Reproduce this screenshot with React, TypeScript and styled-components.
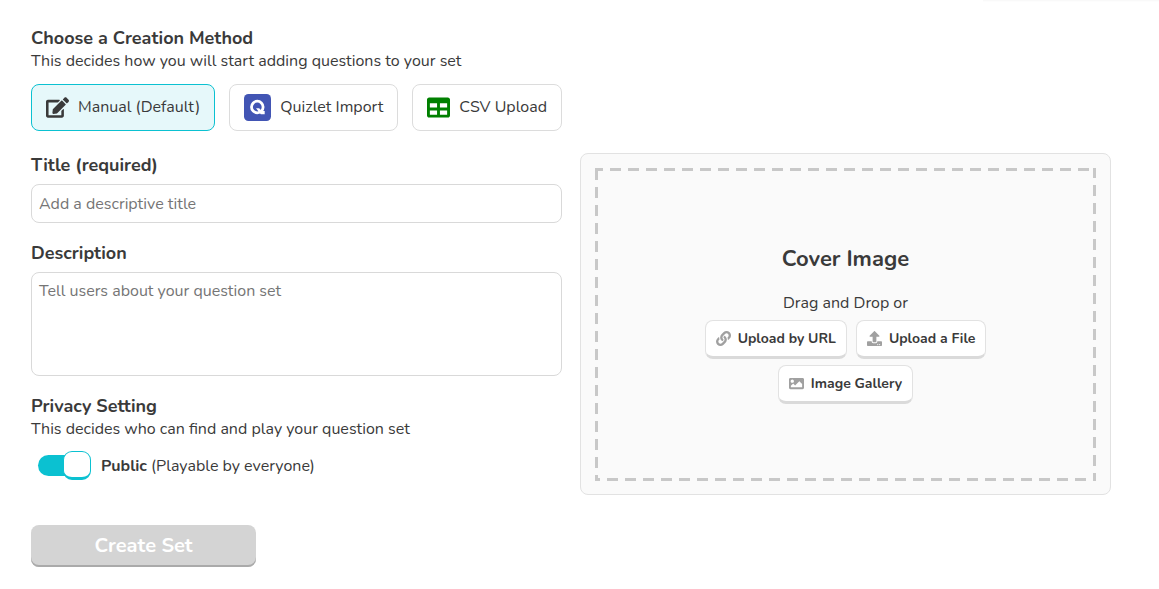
import React from "react";
import styled, { createGlobalStyle } from "styled-components";
import { FaEdit, FaTable, FaLink, FaUpload, FaImage } from "react-icons/fa";

const GlobalStyle = createGlobalStyle`
  *, *::before, *::after { box-sizing: border-box; }
  body {
    margin: 0;
    background: #fff;
    color: #3a3a3a;
    font: 400 16px/22px Nunito, "Open Sans", sans-serif;
  }
  button, input, textarea { font: inherit; color: inherit; }
`;

const HeaderShade = styled.div`
  width: 176px;
  height: 2px;
  margin-left: auto;
  background: linear-gradient(#f7f7f7, #fff);
`;

const Form = styled.form`
  padding: 24px 48px 22px 31px;
`;

const Heading = styled.h2`
  margin: 0;
  font-size: 18px;
  line-height: 24px;
  font-weight: 700;
`;

const FieldLabel = styled.label`
  display: block;
  margin-bottom: 7px;
  font-size: 18px;
  line-height: 24px;
  font-weight: 700;
`;

const Text = styled.p`
  margin: 0;
`;

const Methods = styled.div`
  display: flex;
  flex-wrap: wrap;
  gap: 14px;
  margin: 12px 0 22px;
`;

const MethodButton = styled.button<{ $active?: boolean }>`
  display: flex;
  align-items: center;
  gap: 9px;
  height: 47px;
  padding: 0 14px;
  border: 1px solid ${(p) => (p.$active ? "#0bc1d1" : "#dcdcdc")};
  border-radius: 8px;
  background: ${(p) => (p.$active ? "#e6f8fa" : "#fff")};
  cursor: pointer;
`;

const MethodName = styled.span`
  padding-bottom: 2px;
`;

const Columns = styled.div`
  display: grid;
  grid-template-columns: repeat(auto-fit, minmax(min(100%, 400px), 1fr));
  gap: 18px;
`;

const Fields = styled.div`
  display: flex;
  flex-direction: column;
  gap: 18px;
`;

const TitleInput = styled.input`
  display: block;
  width: 100%;
  height: 39px;
  padding: 0 7px;
  border: 1px solid #d9d9d9;
  border-radius: 8px;
  background: #fff;
  &::placeholder { color: #757575; }
`;

const DescriptionInput = styled.textarea`
  display: block;
  width: 100%;
  height: 104px;
  padding: 7px;
  border: 1px solid #d9d9d9;
  border-radius: 8px;
  background: #fff;
  resize: none;
  &::placeholder { color: #757575; }
`;

const ToggleRow = styled.label`
  display: flex;
  align-items: center;
  gap: 10px;
  margin-top: 11px;
  padding-left: 7px;
  cursor: pointer;
`;

const Toggle = styled.input`
  appearance: none;
  display: flex;
  align-items: center;
  width: 53px;
  height: 29px;
  margin: 0;
  cursor: pointer;
  &::before {
    content: "";
    z-index: 1;
    width: 28px;
    height: 29px;
    border: 1px solid #bbb;
    border-bottom-width: 3px;
    border-radius: 9px;
    background: #fff;
  }
  &::after {
    content: "";
    flex: 1;
    height: 21px;
    margin-left: -8px;
    border-radius: 0 11px 11px 0;
    background: #bbb;
  }
  &:checked::before {
    border-color: #0bc1d1;
  }
  &:checked::after {
    order: -1;
    margin: 0 -8px 0 0;
    border-radius: 11px 0 0 11px;
    background: #0bc1d1;
  }
`;

const CoverPanel = styled.section`
  display: flex;
  min-height: 342px;
  padding: 14px 14px 13px;
  border: 1px solid #e2e2e2;
  border-radius: 8px;
  background: #fafafa;
`;

const dash = (direction: string) =>
  `linear-gradient(${direction}, #c8c8c8 11px, transparent 11px)`;

const DropZone = styled.div`
  flex: 1;
  display: flex;
  flex-direction: column;
  align-items: center;
  justify-content: center;
  background-image: ${dash("to right")}, ${dash("to right")}, ${dash("to bottom")}, ${dash("to bottom")};
  background-size: 18px 3px, 18px 3px, 3px 18px, 3px 18px;
  background-position: -3px 0, -6px 100%, 0 1px, right 0 top -1px;
  background-repeat: repeat-x, repeat-x, repeat-y, repeat-y;
`;

const CoverTitle = styled.h2`
  margin: 0 0 19px;
  font-size: 22px;
  line-height: 28px;
  font-weight: 700;
`;

const UploadActions = styled.div`
  display: flex;
  flex-wrap: wrap;
  justify-content: center;
  gap: 6px 9px;
  max-width: 320px;
  margin-top: 6px;
`;

const UploadButton = styled.button`
  display: flex;
  align-items: center;
  gap: 7px;
  height: 39px;
  padding: 0 10px;
  border: 1px solid #e2e2e2;
  border-bottom: 3px solid #dadada;
  border-radius: 8px;
  background: #fff;
  font-size: 14px;
  font-weight: 700;
  cursor: pointer;
  svg { color: #a0a0a0; }
`;

const SubmitButton = styled.button`
  display: block;
  width: 225px;
  height: 42px;
  margin-top: 30px;
  padding: 0;
  border: 0;
  border-radius: 8px;
  background: #d4d4d4;
  box-shadow: inset 0 -2px #aaa;
  color: #fff;
  font-size: 20px;
  font-weight: 700;
`;

function QuizletLogo() {
  return (
    <svg width="27" height="27" viewBox="0 0 27 27" aria-hidden="true">
      <rect width="27" height="27" rx="4.5" fill="#4255b4" />
      <circle cx="13.3" cy="13" r="5.8" fill="none" stroke="#fff" strokeWidth="2.8" />
      <path d="M12 14.2h3.2l2.3 2.9h3.2v3.1h-3.9z" fill="#fff" />
    </svg>
  );
}

export default function App() {
  return (
    <>
      <GlobalStyle />
      <HeaderShade />
      <Form onSubmit={(e) => e.preventDefault()}>
        <Heading>Choose a Creation Method</Heading>
        <Text>This decides how you will start adding questions to your set</Text>
        <Methods>
          <MethodButton type="button" $active>
            <FaEdit size={23} />
            <MethodName>Manual (Default)</MethodName>
          </MethodButton>
          <MethodButton type="button">
            <QuizletLogo />
            <MethodName>Quizlet Import</MethodName>
          </MethodButton>
          <MethodButton type="button">
            <FaTable size={23} color="#008000" />
            <MethodName>CSV Upload</MethodName>
          </MethodButton>
        </Methods>
        <Columns>
          <Fields>
            <div>
              <FieldLabel htmlFor="title">Title (required)</FieldLabel>
              <TitleInput id="title" type="text" placeholder="Add a descriptive title" />
            </div>
            <div>
              <FieldLabel htmlFor="description">Description</FieldLabel>
              <DescriptionInput id="description" placeholder="Tell users about your question set" />
            </div>
            <div>
              <Heading>Privacy Setting</Heading>
              <Text>This decides who can find and play your question set</Text>
              <ToggleRow>
                <Toggle type="checkbox" defaultChecked />
                <span>
                  <b>Public</b> (Playable by everyone)
                </span>
              </ToggleRow>
            </div>
          </Fields>
          <CoverPanel>
            <DropZone>
              <CoverTitle>Cover Image</CoverTitle>
              <Text>Drag and Drop or</Text>
              <UploadActions>
                <UploadButton type="button">
                  <FaLink size={15} />
                  Upload by URL
                </UploadButton>
                <UploadButton type="button">
                  <FaUpload size={15} />
                  Upload a File
                </UploadButton>
                <UploadButton type="button">
                  <FaImage size={15} />
                  Image Gallery
                </UploadButton>
              </UploadActions>
            </DropZone>
          </CoverPanel>
        </Columns>
        <SubmitButton type="submit" disabled>
          Create Set
        </SubmitButton>
      </Form>
    </>
  );
}
